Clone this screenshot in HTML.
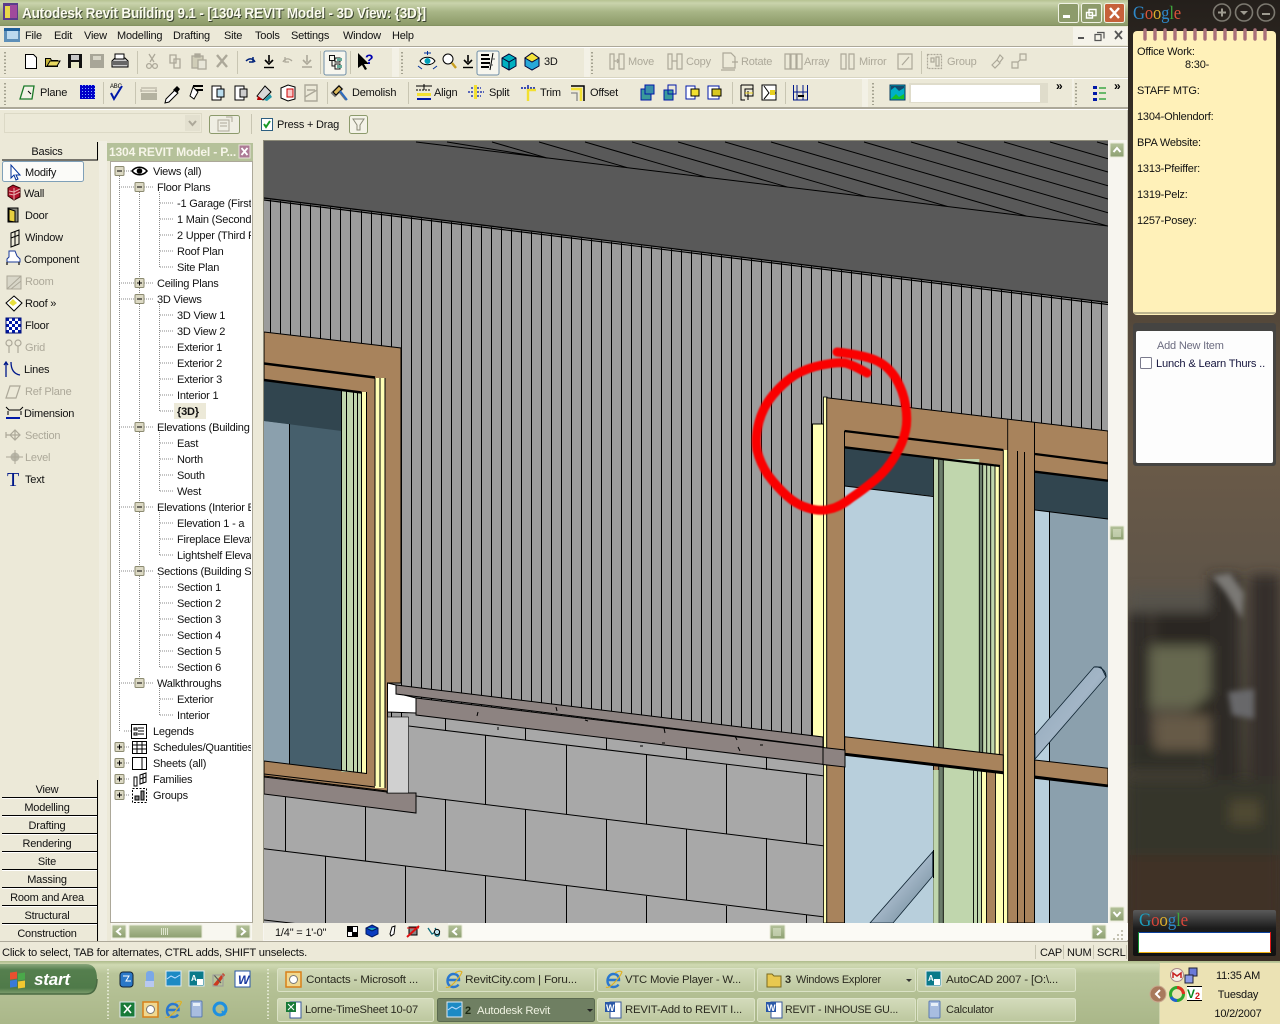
<!DOCTYPE html>
<html><head><meta charset="utf-8"><title>Autodesk Revit Building 9.1</title>
<style>
html,body{margin:0;padding:0;background:#ece9d8;overflow:hidden}
svg{display:block}
text{font-family:"Liberation Sans",sans-serif;font-size:11px;fill:#111;letter-spacing:-.2px}
.d{fill:#aca899}
.m{text-anchor:middle}
.g{font-family:"Liberation Serif",serif;font-size:19px}
.tk{fill:#2b2b20}
</style></head><body>
<svg width="1280" height="1024" viewBox="0 0 1280 1024" xmlns="http://www.w3.org/2000/svg" shape-rendering="auto">
<defs>
<linearGradient id="tb" x1="0" y1="0" x2="0" y2="1"><stop offset="0" stop-color="#b6c291"/><stop offset=".12" stop-color="#c9d3ac"/><stop offset=".45" stop-color="#a8b586"/><stop offset=".95" stop-color="#8d9b69"/><stop offset="1" stop-color="#7f8c5c"/></linearGradient>
<linearGradient id="tbar" x1="0" y1="0" x2="0" y2="1"><stop offset="0" stop-color="#aebb8b"/><stop offset=".06" stop-color="#cfd9b2"/><stop offset=".2" stop-color="#b9c59a"/><stop offset="1" stop-color="#aab789"/></linearGradient>
<linearGradient id="btn" x1="0" y1="0" x2="0" y2="1"><stop offset="0" stop-color="#d3dbbb"/><stop offset="1" stop-color="#bcc79e"/></linearGradient>
<linearGradient id="sb" x1="0" y1="0" x2="0" y2="1"><stop offset="0" stop-color="#b4c29a"/><stop offset="1" stop-color="#8d9f71"/></linearGradient>
<linearGradient id="start" x1="0" y1="0" x2="0" y2="1"><stop offset="0" stop-color="#8aa77c"/><stop offset=".2" stop-color="#557f4e"/><stop offset=".8" stop-color="#4f7a49"/><stop offset="1" stop-color="#80a06f"/></linearGradient>
<linearGradient id="wp" x1="0" y1="0" x2="0" y2="1"><stop offset="0" stop-color="#241f1b"/><stop offset=".15" stop-color="#3a3228"/><stop offset=".33" stop-color="#54483a"/><stop offset=".48" stop-color="#6a5a48"/><stop offset=".66" stop-color="#5a5248"/><stop offset=".85" stop-color="#3f3a30"/><stop offset="1" stop-color="#3b2f25"/></linearGradient>
<linearGradient id="pipe" x1="0" y1="0" x2="1" y2="1"><stop offset="0" stop-color="#8ea6b8"/><stop offset=".5" stop-color="#a2b5c6"/><stop offset="1" stop-color="#64808f"/></linearGradient>
<linearGradient id="gad" x1="0" y1="0" x2="0" y2="1"><stop offset="0" stop-color="#5a5a5a"/><stop offset=".4" stop-color="#1c1c1c"/><stop offset="1" stop-color="#111"/></linearGradient>
<pattern id="s1" x="1" y="0" width="10" height="10" patternUnits="userSpaceOnUse"><rect width="10" height="10" fill="#9c9c9c"/><rect width="1" height="10" fill="#000"/></pattern>
<pattern id="s0" x="0" y="0" width="10" height="10" patternUnits="userSpaceOnUse"><rect width="10" height="10" fill="#9c9c9c"/><rect width="1" height="10" fill="#000"/></pattern>
<pattern id="chk" width="6" height="6" patternUnits="userSpaceOnUse"><rect width="6" height="6" fill="#fff"/><rect width="3" height="3" fill="#0018a8"/><rect x="3" y="3" width="3" height="3" fill="#0018a8"/></pattern>
<pattern id="grd" width="3" height="3" patternUnits="userSpaceOnUse"><rect width="3" height="3" fill="#0000c8"/><rect x="1" y="1" width="1" height="1" fill="#7fb0ff"/></pattern>
<filter id="b1"><feGaussianBlur stdDeviation="0.7"/></filter>
<filter id="b3"><feGaussianBlur stdDeviation="3"/></filter>
<filter id="b6"><feGaussianBlur stdDeviation="6"/></filter>
<clipPath id="vp"><rect x="264" y="141" width="844" height="782"/></clipPath>
<clipPath id="tree"><rect x="111" y="162" width="140" height="760"/></clipPath>
<g id="mn"><rect x="-4.5" y="-4.5" width="9" height="9" rx="1" fill="#dcd9c4" stroke="#8b8a70"/><path d="M-2.5 0h5" stroke="#000"/></g>
<g id="pl"><rect x="-4.5" y="-4.5" width="9" height="9" rx="1" fill="#dcd9c4" stroke="#8b8a70"/><path d="M-2.5 0h5M0-2.5v5" stroke="#000"/></g>
<path id="rg" d="M0 0v9" stroke="#a8707a" stroke-width="3.4" stroke-linecap="round"/>
<g id="ie"><path d="M-6 1h11c0-4-2-6-5.500-6s-6 3-6 7 3 6 6 6 4-1 5-2.500" fill="none" stroke="#2a78d0" stroke-width="2.400"/><path d="M-8 8q2 2 8-4t8-11q-2-2-7 1" fill="none" stroke="#e0b020" stroke-width="1.100"/></g>
</defs>

<!-- base -->
<rect width="1280" height="1024" fill="#ece9d8"/>

<!-- wallpaper -->
<rect x="1128" y="0" width="152" height="961" fill="url(#wp)"/>
<g filter="url(#b6)">
<rect x="1128" y="590" width="90" height="24" fill="#56524c"/>
<rect x="1128" y="612" width="22" height="150" fill="#2f2a25"/>
<rect x="1152" y="612" width="58" height="34" fill="#2c2824"/>
<rect x="1150" y="646" width="60" height="62" fill="#66684f"/>
<rect x="1210" y="575" width="30" height="210" fill="#2f2a25"/>
<rect x="1250" y="575" width="30" height="220" fill="#352f2a"/>
<path d="M1150 745L1210 695V725L1165 760z" fill="#26221e"/>
<rect x="1128" y="745" width="80" height="25" fill="#2f2e27"/>
<rect x="1155" y="715" width="55" height="35" fill="#665a46"/>
<rect x="1128" y="780" width="152" height="75" fill="#34352a"/>
<rect x="1128" y="855" width="152" height="70" fill="#3f3327"/>
<rect x="1230" y="800" width="30" height="25" fill="#4f4a30"/>
</g>
<g filter="url(#b3)">
<path d="M1212 576l18-3 14 20-2 26-16-26z" fill="#7a7874"/>
<path d="M1228 692l26-3v30l-22-4z" fill="#67676a"/>
</g>

<!-- title bar -->
<rect x="0" y="0" width="1128" height="26" fill="url(#tb)"/>
<rect x="3" y="3" width="15" height="17" fill="#5a3d8c"/><rect x="5" y="6" width="5" height="12" fill="#e8d84a"/><rect x="10" y="5" width="7" height="13" fill="#a04a9c"/>
<text x="23" y="19" style="font-size:15px;font-weight:bold;fill:#3c4530" textLength="404" lengthAdjust="spacingAndGlyphs">Autodesk Revit Building 9.1 - [1304 REVIT Model - 3D View: {3D}]</text>
<text x="22" y="18" style="font-size:15px;font-weight:bold;fill:#fbfbef" textLength="404" lengthAdjust="spacingAndGlyphs">Autodesk Revit Building 9.1 - [1304 REVIT Model - 3D View: {3D}]</text>
<rect x="1058.5" y="3.5" width="20" height="19" rx="2" fill="#8d9b6b" stroke="#f0f2e4"/><rect x="1063" y="15" width="7" height="3" fill="#fff"/>
<rect x="1081.5" y="3.5" width="20" height="19" rx="2" fill="#8d9b6b" stroke="#f0f2e4"/><path d="M1089 9.5h7v6h-7z M1086.5 12.5h6v5.5h-6z" fill="none" stroke="#fff" stroke-width="1.4"/>
<rect x="1104.5" y="3.5" width="20" height="19" rx="2" fill="#c6613a" stroke="#f0f2e4"/><path d="M1110 8l9 10M1119 8l-9 10" stroke="#fff" stroke-width="2.4"/>

<!-- menu bar -->
<rect x="0" y="26" width="1128" height="20" fill="#ece9d8"/>
<rect x="4" y="28" width="16" height="14" fill="#5e8fb8"/><rect x="7" y="31" width="11" height="8" fill="#bcd9ee"/><rect x="4" y="28" width="16" height="3" fill="#1f5f9a"/>
<text x="25" y="39">File</text><text x="54" y="39">Edit</text><text x="84" y="39">View</text><text x="117" y="39">Modelling</text><text x="173" y="39">Drafting</text><text x="224" y="39">Site</text><text x="255" y="39">Tools</text><text x="291" y="39">Settings</text><text x="343" y="39">Window</text><text x="392" y="39">Help</text>
<rect x="1073" y="27" width="54" height="18" fill="#f5f3ea"/>
<rect x="1078" y="37" width="6" height="2" fill="#555"/>
<path d="M1097 32.5h7v6M1095 34.5h6v6h-6z" fill="none" stroke="#555" stroke-width="1.2"/>
<path d="M1115 31l7 8M1122 31l-7 8" stroke="#555" stroke-width="1.8"/>

<!-- toolbars -->
<rect x="0" y="46" width="1128" height="1" fill="#aca899"/><rect x="0" y="47" width="1128" height="1" fill="#fff"/>
<rect x="0" y="77" width="1128" height="1" fill="#d8d5c2"/><rect x="0" y="78" width="1128" height="1" fill="#fff"/>
<rect x="0" y="107" width="1128" height="2" fill="#aca899"/><rect x="0" y="109" width="1128" height="1" fill="#fff"/>
<rect x="392" y="48" width="7" height="29" fill="#f3f1e6"/><rect x="584" y="48" width="6" height="29" fill="#f3f1e6"/>
<rect x="862" y="79" width="6" height="28" fill="#f3f1e6"/><rect x="1072" y="79" width="2" height="28" fill="#f3f1e6"/>
<g stroke="#8c8a78" stroke-dasharray="1.5 2" stroke-width="1.5" fill="none">
<path d="M5 52v22M5 83v22M402 52v22M592 52v22M873 83v22M1076 83v22"/>
</g>
<g stroke="#c8c5b2"><path d="M137.5 51v23M237.5 51v23M320.5 51v23M350.5 51v23M921.5 51v23M103.5 82v22M135.5 82v22M327.5 82v22M408.5 82v22M732.5 82v22M785.5 82v22M251.5 114v20"/></g>

<!-- row 1 icons -->
<path d="M25.5 54.5h8l3 3v11h-11z" fill="#fff" stroke="#000"/>
<path d="M45.5 66.5v-8h5l1 2h6v6z" fill="#c7b63c" stroke="#000"/><path d="M47 66l3-5h10l-3 5z" fill="#e8d860" stroke="#000"/>
<rect x="68" y="54" width="14" height="14" fill="#111"/><rect x="71" y="55" width="8" height="5" fill="#c8c8c8"/><rect x="71" y="62" width="8" height="6" fill="#e8e8c8"/>
<rect x="90" y="54" width="14" height="14" fill="#a8a698"/><rect x="93" y="56" width="8" height="4" fill="#d8d6c8"/>
<path d="M115 58h10l3 3v6h-16v-6z" fill="#ccc" stroke="#000"/><rect x="115" y="54" width="9" height="5" fill="#fff" stroke="#000"/><path d="M113 62h14M113 64h14" stroke="#000"/>
<g fill="none" stroke="#aca899" stroke-width="1.3">
<path d="M149 54l5 8M155 54l-5 8"/><circle cx="149" cy="66" r="2.4"/><circle cx="155" cy="66" r="2.4"/>
<path d="M170 55h6v8h-6zM174 59h6v9h-6z"/>
<rect x="192" y="56" width="11" height="12" fill="#d0cdb8"/><rect x="195" y="54" width="5" height="3" fill="#aca899"/><rect x="198" y="60" width="8" height="9" fill="#e8e6d8"/>
<path d="M217 55l10 12M227 55l-10 12" stroke-width="2.4"/>
<path d="M283 62c2-4 6-4 9-1M285 57v5h4"/><path d="M307 55v7M303 60l4 4 4-4M302 67h10" stroke-width="1.6"/>
</g>
<path d="M255 62c-2-4-6-4-9-1M253 57v5h-4" fill="none" stroke="#00227a" stroke-width="1.5"/>
<path d="M269 55v7M265 60l4 4 4-4" fill="none" stroke="#000" stroke-width="1.6"/><path d="M264 67.5h10" stroke="#000" stroke-width="1.4"/>
<rect x="324" y="51" width="22" height="24" rx="2" fill="#f7f6ee" stroke="#6f8fa8"/>
<path d="M329.5 55.5h5v5h-5zM335 58h5v4h-5zM335 64h5v5h-5zM332 60v6h3" fill="none" stroke="#111"/>
<rect x="337" y="58" width="5" height="3" fill="#6a9"/><rect x="337" y="65" width="5" height="3" fill="#6a9"/>
<path d="M358 53v15l4-3 3 5 2-1-3-5h5z" fill="#000"/><text x="365" y="64" style="font-size:14px;font-weight:bold;fill:#0000b0">?</text>
<path d="M420 61c3-5 12-5 15 0-3 5-12 5-15 0z" fill="#fff" stroke="#000"/><circle cx="427.5" cy="61" r="3" fill="#00a0b8"/><path d="M427.5 51v4M424 53h7" stroke="#00309a"/><path d="M418 66l4 3M437 66l-4 3" stroke="#00309a"/>
<circle cx="448" cy="59" r="5" fill="#fff" stroke="#000"/><path d="M452 63l4 5" stroke="#caa020" stroke-width="2.4"/>
<path d="M468 55v7M464 60l4 4 4-4" fill="none" stroke="#000" stroke-width="1.6"/><path d="M463 67.5h10" stroke="#000" stroke-width="1.4"/>
<rect x="477" y="51" width="22" height="24" rx="2" fill="#f7f6ee" stroke="#6f8fa8"/>
<path d="M481 55h8M481 59h9M481 63h9M481 67h8" stroke="#000" stroke-width="2"/><path d="M490 70l3-17" stroke="#000"/><path d="M491 59h4M489 65h4" stroke="#555"/>
<path d="M509 54l7 4v8l-7 4-7-4v-8z" fill="#00b0c0" stroke="#003"/><path d="M502 58l7 4 7-4M509 62v8" fill="none" stroke="#003"/>
<path d="M532 53l7 5v8l-7 4-7-4v-8z" fill="#28a8d8" stroke="#003"/><path d="M525 58l7-5 7 5-7 4z" fill="#f2e23c" stroke="#003"/>
<text x="544" y="65">3D</text>
<g stroke="#aca899" fill="none" stroke-width="1.2">
<path d="M610 54h4v15h-4zM619 54h5v15h-5zM614 61h5M617 59l2 2-2 2"/>
<path d="M668 54h4v15h-4zM677 54h5v15h-5zM672 61h5"/>
<path d="M723 53h8l4 4v11h-12zM721 70h14M732 62h6"/>
<path d="M785 54h5v15h-5zM791 54h5v15h-5zM797 54h5v15h-5z"/>
<path d="M841 54h5v15h-5zM849 54h5v15h-5z"/>
<path d="M898 54h14v15h-14zM902 65l7-8"/>
<path d="M927.500 54.500h14v14h-14z" stroke-dasharray="2 1"/><rect x="931" y="58" width="3" height="4"/><rect x="936" y="57" width="3" height="9"/>
<path d="M992 65l5-5 3 3-5 5zM997 60l3-5 3 3-3 4"/><path d="M1012 62h6v6h-6zM1020 54h6v6h-6zM1018 62l2-2"/>
</g>
<text class="d" x="628" y="65">Move</text><text class="d" x="686" y="65">Copy</text><text class="d" x="741" y="65">Rotate</text><text class="d" x="804" y="65">Array</text><text class="d" x="859" y="65">Mirror</text><text class="d" x="947" y="65">Group</text>

<!-- row 2 icons -->
<path d="M24 86h10l-2 13H20z" fill="#fff" fill-opacity=".4" stroke="#1a7a28" stroke-width="1.3"/><path d="M28 91l3 3" stroke="#000"/>
<text x="40" y="96">Plane</text>
<rect x="80" y="85" width="15" height="14" fill="url(#grd)"/>
<text x="110" y="88" style="font-size:6px;fill:#000">ABC</text><path d="M111 93l3 6 8-13" fill="none" stroke="#0018a8" stroke-width="2"/>
<path d="M141 89v3M156 89v3" stroke="#aca899"/><path d="M141 88h16M141 91h16" stroke="#aca899"/><rect x="141" y="93" width="16" height="7" fill="#b4b2a0"/>
<path d="M166 99l9-9 3 3-9 9-4 1z" fill="#fff" stroke="#000"/><path d="M173 90l4-4 3 3-3 4z" fill="#000"/>
<path d="M190 96l3-9 5 5-4 7z" fill="#fff" stroke="#000"/><path d="M193 86h10M196 90h7" stroke="#000" stroke-width="2"/>
<rect x="212" y="86" width="9" height="14" fill="#fff" stroke="#000"/><rect x="217" y="89" width="7" height="8" fill="#bde" stroke="#000"/>
<rect x="235" y="86" width="9" height="14" fill="#fff" stroke="#000"/><rect x="240" y="89" width="7" height="8" fill="#ccc" stroke="#000"/>
<path d="M257 96l8-10 6 6-8 8z" fill="#d8d8d8" stroke="#000"/><path d="M258 96l5 4-6 0z" fill="#b00"/><path d="M264 100l6-6 2 3-5 4z" fill="#29a"/>
<path d="M281 88l7-3 7 2v12l-7 2-7-3z" fill="#fff" stroke="#000"/><rect x="287" y="89" width="6" height="8" fill="#f8c8c8" stroke="#c00"/>
<path d="M305 85h12v16h-12zM307 90h8M305 97l12-7" stroke="#aca899" fill="none" stroke-width="1.4"/>
<path d="M332 93l7-7 3 3-7 7zM338 90l8 10" fill="none" stroke="#777" stroke-width="2"/><path d="M333 92l6-6 3 3-6 6z" fill="#dcb95c" stroke="#000"/><path d="M340 91l7 9" stroke="#2c6cc0" stroke-width="2"/>
<text x="352" y="96">Demolish</text>
<path d="M416 86h16M424 84v6" stroke="#000"/><path d="M416 90h14" stroke="#000" stroke-dasharray="2 1"/><rect x="417" y="93" width="14" height="3" fill="#f2e030"/><path d="M417 99h14" stroke="#0018a8" stroke-width="2"/>
<text x="434" y="96">Align</text>
<path d="M468 92h16M471 88h10M471 96h10" stroke="#0018a8" stroke-dasharray="2 1" stroke-width="1.3"/><rect x="474" y="85" width="3" height="14" fill="#f2e030"/>
<text x="489" y="96">Split</text>
<path d="M521 88h14M528 85v16" stroke="#0018a8" stroke-width="1.4" stroke-dasharray="2 1"/><path d="M528 101V90h8" fill="none" stroke="#f2e030" stroke-width="2.4"/>
<text x="540" y="96">Trim</text>
<path d="M571 86h13v15" fill="none" stroke="#000" stroke-width="1.5"/><path d="M571 89h10v12" fill="none" stroke="#f2e030" stroke-width="2.5"/><path d="M571 93h6v8" fill="none" stroke="#888" stroke-width="1.3"/>
<text x="590" y="96">Offset</text>
<rect x="641" y="89" width="10" height="11" fill="#3a9a9a" stroke="#0018a8"/><rect x="645" y="85" width="9" height="9" fill="#3a8fa8" stroke="#0018a8"/>
<rect x="664" y="90" width="9" height="10" fill="#3a9a9a" stroke="#0018a8"/><rect x="668" y="85" width="8" height="9" fill="none" stroke="#0018a8"/>
<rect x="686" y="86" width="9" height="13" fill="#fff" stroke="#0018a8"/><rect x="691" y="89" width="8" height="7" fill="#f2e030" stroke="#000"/>
<rect x="708" y="86" width="11" height="13" fill="#fff" stroke="#0018a8"/><rect x="712" y="89" width="9" height="7" fill="#d8c820" stroke="#000"/>
<path d="M741 85h12v4M741 85v15h4" fill="none" stroke="#000"/><path d="M745 89h8v7h-8zM748 91v9" fill="none" stroke="#000"/><path d="M745 93h8" stroke="#e8d020"/>
<rect x="762" y="85" width="14" height="15" fill="#fff" stroke="#000"/><path d="M764 86l5 7-5 6M770 93h6" stroke="#000" fill="none"/><rect x="770" y="90" width="5" height="5" fill="#e8d020"/>
<path d="M793.500 85v15h14v-15M793 92h14M797 85v15M803 85v15" fill="none" stroke="#00188a"/><path d="M798 96h6" stroke="#000" stroke-width="2"/>
<rect x="890" y="85" width="15" height="15" fill="#00b0c8" stroke="#0a3a5a"/><path d="M891 90l4-3 4 4 5-3v-2h-13z" fill="#14496c"/><path d="M891 99l5-5 3 3 5-3v5z" fill="#18c02a"/>
<rect x="909" y="83" width="139" height="20" fill="#dfdccb"/><rect x="911" y="85" width="129" height="17" fill="#fff"/>
<text x="1056" y="90" style="font-size:12px;font-weight:bold;fill:#000">»</text><text x="1114" y="90" style="font-size:12px;font-weight:bold;fill:#000">»</text>
<path d="M1093 86h4v3h-4zM1093 92h4v3h-4zM1093 98h4v3h-4z" fill="#0018a8"/><path d="M1099 88h7M1099 93h7M1099 99h7" stroke="#1a9a28" stroke-width="1.2"/>

<!-- left palette -->
<rect x="0" y="141" width="99" height="801" fill="#ece9d8"/>
<rect x="99" y="141" width="8" height="801" fill="#f0eee2"/>

<!-- row 3 -->
<rect x="4.500" y="113.500" width="197" height="19" fill="#ece9d8" stroke="#dcd9c6"/><rect x="185" y="115" width="15" height="16" fill="#e3e0cf"/><path d="M189 121l3.500 4 3.500-4" fill="none" stroke="#aca899" stroke-width="2"/>
<rect x="209.500" y="115.500" width="30" height="18" rx="2" fill="#efeee3" stroke="#8c9a6c"/><rect x="218" y="120" width="11" height="11" fill="none" stroke="#aca899"/><path d="M220 123h7M220 126h7M226 117h6v5" fill="none" stroke="#aca899"/>
<rect x="261.500" y="118.500" width="11" height="12" fill="#fff" stroke="#2c5e80"/><path d="M264 124l2 3 4-6" fill="none" stroke="#1a9a28" stroke-width="2"/>
<text x="277" y="128">Press + Drag</text>
<rect x="349.500" y="115.500" width="18" height="18" rx="2" fill="#f4f3e8" stroke="#8c9a6c"/><path d="M353 119h11l-4 6v5h-3v-5z" fill="none" stroke="#8a8a78"/>

<rect x="2" y="142" width="96" height="18" fill="#ece9d8"/><path d="M97.500 142v18H2" fill="none" stroke="#000"/>
<text class="m" x="47" y="155">Basics</text>
<rect x="2.500" y="161.500" width="81" height="20" rx="2" fill="#fbfbf8" stroke="#7fa0b8"/>
<path d="M11 165v13l3-3 2 5 2-1-2-4h4z" fill="#fff" stroke="#00309a"/>
<text x="25" y="176">Modify</text><text x="24" y="197">Wall</text><text x="25" y="219">Door</text><text x="25" y="241">Window</text><text x="24" y="263">Component</text>
<text class="d" x="25" y="285">Room</text><text x="25" y="307">Roof »</text><text x="25" y="329">Floor</text><text class="d" x="25" y="351">Grid</text><text x="24" y="373">Lines</text><text class="d" x="25" y="395">Ref Plane</text><text x="24" y="417">Dimension</text><text class="d" x="25" y="439">Section</text><text class="d" x="25" y="461">Level</text><text x="25" y="483">Text</text>
<path d="M8 188l5-3 7 3v9l-6 3-6-4z" fill="#b0142c" stroke="#300"/><path d="M14 188v12M9 191l5 1 6-3M9 194l5 1 6-3" stroke="#e8b0b0" fill="none"/>
<rect x="8" y="208" width="10" height="14" fill="#8a8a80" stroke="#000"/><path d="M9 209l6 2v11l-6-1z" fill="#e8d040" stroke="#000"/>
<path d="M11 233l8-3v14l-8 3zM15 231v15M11 238l8-3" fill="none" stroke="#000"/>
<path d="M9 251h6l2 5 3 3v3H7v-3l2-2z" fill="#fff" stroke="#1a3a9a"/><path d="M7 262v3M19 262v3" stroke="#333" stroke-width="1.5"/>
<path d="M7 276h14v13H7z" fill="#d8d6c8" stroke="#aca899"/><path d="M7 289l14-13M11 289l10-8" stroke="#aca899"/>
<path d="M14 296l8 7-8 8-8-8z" fill="#fff" stroke="#000"/><path d="M13 299l4 4-4 3-4-3z" fill="#e8e040"/>
<rect x="6" y="318" width="15" height="15" fill="url(#chk)" stroke="#00107a"/>
<g stroke="#aca899" fill="none" stroke-width="1.2"><circle cx="9" cy="343" r="3"/><circle cx="18" cy="343" r="3"/><path d="M9 346v7M18 346v7"/><path d="M10 386h10l-4 12H6z"/><path d="M6 432v6M6 435h5M10 435l5-5 5 5-5 5zM10 435h10M15 430v10"/></g>
<circle cx="15" cy="457" r="4.500" fill="#b8b6a8"/><path d="M6 457h17M15 450v14" stroke="#aca899"/>
<path d="M6 362v15M4 365l2-3 2 3M11 362c0 8 3 12 9 13" fill="none" stroke="#00188a" stroke-width="1.3"/>
<path d="M6 407l3 3h11l3-3M8 411v4M21 411v4" fill="none" stroke="#000"/><rect x="6" y="417" width="14" height="2" fill="#0018a8"/>
<text x="7" y="486" style="font-family:'Liberation Serif',serif;font-size:20px;fill:#00188a">T</text>
<g>
<rect x="2" y="780" width="96" height="161" fill="#ece9d8"/>
<path d="M2 797.500h96M2 815.500h96M2 833.500h96M2 851.500h96M2 869.500h96M2 887.500h96M2 905.500h96M2 923.500h96M97.500 780v161" stroke="#000" fill="none"/>
<path d="M2 798.500h95M2 816.500h95M2 834.500h95M2 852.500h95M2 870.500h95M2 888.500h95M2 906.500h95M2 924.500h95" stroke="#fff"/>
</g>
<text class="m" x="47" y="793">View</text><text class="m" x="47" y="811">Modelling</text><text class="m" x="47" y="829">Drafting</text><text class="m" x="47" y="847">Rendering</text><text class="m" x="47" y="865">Site</text><text class="m" x="47" y="883">Massing</text><text class="m" x="47" y="901">Room and Area</text><text class="m" x="47" y="919">Structural</text><text class="m" x="47" y="937">Construction</text>

<!-- project browser -->
<rect x="107" y="141" width="156" height="800" fill="#ece9d8"/>
<rect x="107" y="143" width="146" height="18" fill="#b5c19a"/>
<text x="109" y="156" style="font-weight:bold;font-size:12px;fill:#f6f5e8" textLength="127" lengthAdjust="spacingAndGlyphs">1304 REVIT Model - P...</text>
<rect x="239" y="145" width="11" height="13" fill="#ad7b96" stroke="#e8e2d8"/><path d="M241.500 148l6 7M247.500 148l-6 7" stroke="#fff" stroke-width="1.8"/>
<rect x="110.500" y="161.500" width="142" height="761" fill="#fff" stroke="#aca899"/>
<g stroke="#8a8a8a" stroke-dasharray="1 1" fill="none">
<path d="M119.500 176V731M139.500 192V683M159.500 192V267M159.500 304V411M159.500 432V491M159.500 512V555M159.500 576V667M159.500 688V715"/>
<path d="M124 171h8M124 731h8M124 747h6M124 763h6M124 779h6M124 795h6M119 187h16M119 283h16M119 299h16M119 427h16M119 507h16M119 571h16M119 683h16M144 187h10M144 283h10M144 299h10M144 427h10M144 507h10M144 571h10M144 683h10"/>
<path d="M160 203h14M160 219h14M160 235h14M160 251h14M160 267h14M160 315h14M160 331h14M160 347h14M160 363h14M160 379h14M160 395h14M160 411h13M160 443h14M160 459h14M160 475h14M160 491h14M160 523h14M160 539h14M160 555h14M160 587h14M160 603h14M160 619h14M160 635h14M160 651h14M160 667h14M160 699h14M160 715h14"/>
</g>
<use href="#mn" x="119.500" y="171"/><use href="#mn" x="139.500" y="187"/><use href="#pl" x="139.500" y="283"/><use href="#mn" x="139.500" y="299"/><use href="#mn" x="139.500" y="427"/><use href="#mn" x="139.500" y="507"/><use href="#mn" x="139.500" y="571"/><use href="#mn" x="139.500" y="683"/><use href="#pl" x="119.500" y="747"/><use href="#pl" x="119.500" y="763"/><use href="#pl" x="119.500" y="779"/><use href="#pl" x="119.500" y="795"/>
<path d="M132 171c4-5 11-5 15 0-4 5-11 5-15 0z" fill="#fff" stroke="#000" stroke-width="1.5"/><circle cx="139.500" cy="171" r="2.800" fill="#000"/>
<rect x="131.500" y="724.500" width="15" height="14" fill="#fff" stroke="#000"/><path d="M134 728h3v2h-3zM134 733h3v2h-3zM138 728h6M138 731h6M138 734h6" stroke="#000" fill="none"/>
<path d="M132.500 741.500h14v12h-14zM132 745h15M132 749h15M137 742v12M142 742v12" fill="none" stroke="#000"/>
<path d="M132.500 757.500h14v12h-14zM142 758v12" fill="none" stroke="#000"/>
<path d="M134 777h3v9h-3z" fill="#fff" stroke="#000"/><path d="M140 775l6-2v9l-6 2zM143 774v9M140 779l6-2" fill="none" stroke="#000"/>
<rect x="132.500" y="788.500" width="14" height="14" fill="none" stroke="#000" stroke-dasharray="2 1.500"/><rect x="135" y="796" width="4" height="4" fill="#888" stroke="#000"/><rect x="141" y="791" width="3" height="9" fill="#888" stroke="#000"/>
<rect x="174" y="403" width="32" height="16" fill="#ece9d8"/>
<g clip-path="url(#tree)">
<text x="153" y="175">Views (all)</text><text x="157" y="191">Floor Plans</text>
<text x="177" y="207">-1 Garage (First Floor)</text><text x="177" y="223">1 Main (Second Floor)</text><text x="177" y="239">2 Upper (Third Floor)</text><text x="177" y="255">Roof Plan</text><text x="177" y="271">Site Plan</text>
<text x="157" y="287">Ceiling Plans</text><text x="157" y="303">3D Views</text>
<text x="177" y="319">3D View 1</text><text x="177" y="335">3D View 2</text><text x="177" y="351">Exterior 1</text><text x="177" y="367">Exterior 2</text><text x="177" y="383">Exterior 3</text><text x="177" y="399">Interior 1</text><text x="177" y="415" style="font-weight:bold">{3D}</text>
<text x="157" y="431">Elevations (Building Elevation)</text>
<text x="177" y="447">East</text><text x="177" y="463">North</text><text x="177" y="479">South</text><text x="177" y="495">West</text>
<text x="157" y="511">Elevations (Interior Elevation)</text>
<text x="177" y="527">Elevation 1 - a</text><text x="177" y="543">Fireplace Elevation</text><text x="177" y="559">Lightshelf Elevation</text>
<text x="157" y="575">Sections (Building Section)</text>
<text x="177" y="591">Section 1</text><text x="177" y="607">Section 2</text><text x="177" y="623">Section 3</text><text x="177" y="639">Section 4</text><text x="177" y="655">Section 5</text><text x="177" y="671">Section 6</text>
<text x="157" y="687">Walkthroughs</text><text x="177" y="703">Exterior</text><text x="177" y="719">Interior</text>
<text x="153" y="735">Legends</text><text x="153" y="751">Schedules/Quantities</text><text x="153" y="767">Sheets (all)</text><text x="153" y="783">Families</text><text x="153" y="799">Groups</text>
</g>
<rect x="111" y="923" width="141" height="17" fill="#f8f7f0"/>
<rect x="112" y="925" width="14" height="13" rx="1" fill="url(#sb)" stroke="#e8ead8"/><path d="M121 928l-4 3.500 4 3.500" fill="none" stroke="#fff" stroke-width="2"/>
<rect x="129" y="925" width="73" height="13" rx="1" fill="url(#sb)" stroke="#e8ead8"/><path d="M161.500 928v7M163.500 928v7M165.500 928v7M167.500 928v7" stroke="#dfe6cf"/>
<rect x="236" y="925" width="14" height="13" rx="1" fill="url(#sb)" stroke="#e8ead8"/><path d="M241 928l4 3.500-4 3.500" fill="none" stroke="#fff" stroke-width="2"/>

<!-- viewport -->
<rect x="263" y="140" width="865" height="801" fill="#f7f5ef"/>
<path d="M263.500 141V923M263 140.500H1108" stroke="#8c8a78"/>
<g clip-path="url(#vp)">
<rect x="264" y="141" width="90" height="782" fill="url(#s0)"/>
<rect x="354" y="141" width="754" height="782" fill="url(#s1)"/>
<path d="M264 141H1108V303L264 199z" fill="#595959"/>
<path d="M264 198L1108 302.500M264 200L1108 304.500" stroke="#000" stroke-width="1.200"/>
<g stroke="#000" fill="none"><path d="M416 142L1108 226M447 142L547 158M492 142L547 158M539 142L627.500 167.700M585 142L706.700 177.300M632 142L788 187.200M678 142L867 196.800M725 142L947.600 206.500M771 142L1026.600 216.100M818 142L1107 225.800M864 142L1108 212.800M911 142L1108 199M957 142L1108 185.800M1004 142L1108 172M1050 142L1108 158.800M1097 142L1108 145"/></g>

<!-- block wall -->
<path d="M408 710L825 762V923H264V792H408z" fill="#a8a8a8"/>
<g stroke="#000" fill="none">
<path d="M408.500 726L825 776M416 796L825 846M264 848.700L825 917M264 920L295 923.500"/>
<path d="M408 718L408 726"/>
<path d="M445.500 719v12M525.500 728v12M606.500 738v12M686.500 748v12M766.500 757v13"/>
<path d="M485.500 735v69M566.500 745v69M646.500 755v69M726.500 764v70M806.500 774v70"/>
<path d="M285.500 795v56M365.500 800v61M445.500 799v72M525.500 809v71M606.500 819v71M686.500 829v71M766.500 838v72"/>
<path d="M325.500 856v67M405.500 866v57M485.500 876v47M566.500 886v37M646.500 896v27M726.500 906v17M806.500 915v8"/>
</g>

<!-- left window -->
<path d="M264 332L401 348V683H387.500V792H264z" fill="#a8835c" stroke="#000"/>
<path d="M264 380L341.500 390V770L264 761z" fill="#465f6c"/>
<path d="M264 421L289.500 424V764L264 761z" fill="#8ba0ad"/>
<path d="M264 380L341.500 390V431L264 421z" fill="#31454f"/>
<path d="M289.500 424V764" stroke="#000"/>
<rect x="341.500" y="391" width="20" height="381" fill="#c0d6ad"/>
<rect x="361.500" y="392" width="5" height="381" fill="#ffffb4"/>
<rect x="375" y="378" width="10" height="410" fill="#ffffb4"/>
<path d="M341.500 391V771M346.500 391V771M353.500 391V772M357.500 392V772M361.500 392V773M366.500 392V774M375 378V786M380 378V787M385 378V788" stroke="#000"/>
<path d="M264 363.500L375 377.500M264 380L361.500 392.500" stroke="#000" stroke-width="2.400"/>
<path d="M264 761L366.500 773.500M264 774L375 787M264 776L387 791" stroke="#000"/>
<path d="M264 777L387 792V793H416V813L264 794z" fill="#8d8381" stroke="#000"/>
<rect x="387.500" y="717" width="21" height="76" fill="#d0d0d0" stroke="#000" stroke-width=".6"/>
<path d="M387.500 683L396 685V693L416 698V713L387.500 712z" fill="#fff" stroke="#000"/>

<!-- yellow strip beside right window -->
<rect x="812.500" y="424" width="11" height="316" fill="#ffffb4" stroke="#000"/>
<!-- bands -->
<path d="M396 685L823 737V747L396 694z" fill="#8d8381" stroke="#000"/>
<path d="M416 698L845 750V767L416 715z" fill="#8d8381" stroke="#000"/>
<g stroke="#000" fill="none"><path d="M478 712l-1 4M556 707l1 4M585 720l3 1M664 728l1 5M735 736l2 4M760 745h3M738 747l2 4M498 727v3M640 746h3M662 743h3"/></g>

<!-- right window -->
<rect x="823.500" y="397" width="3.500" height="526" fill="#ffffb4" stroke="#000" stroke-width=".8"/>
<path d="M826.700 397.700L1108 431V923H826.700z" fill="#a8835c" stroke="#000"/>
<path d="M844.500 486L933.500 496V923H844.500z" fill="#b8cfdc"/>
<path d="M844.500 447L933.300 458V496L844.500 486z" fill="#31454f"/>
<path d="M844.500 486L933.300 496.500" stroke="#000"/>
<path d="M844.500 431V923" stroke="#000"/>
<!-- central strips upper -->
<rect x="933.300" y="458" width="5.400" height="300" fill="#c0d6ad"/><rect x="938.700" y="459" width="4.600" height="464" fill="#6b7c6b"/><rect x="943.300" y="459" width="36" height="464" fill="#c0d6ad"/>
<rect x="979.300" y="463" width="3.400" height="295" fill="#6b7c6b"/><rect x="982.700" y="464" width="12.300" height="295" fill="#c0d6ad"/>
<rect x="995" y="465" width="4.300" height="296" fill="#ffffb4"/><rect x="999.300" y="450" width="4" height="306" fill="#a8835c"/><rect x="1003.300" y="450" width="4.400" height="473" fill="#ffffb4"/>
<path d="M933.500 458V923M938.700 458V923M943.300 459V923M979.300 463V755M982.700 463V755M986.700 464V755M990.700 465V755M995 465V757M999.300 465V757M1003.300 450V772M1007.700 419V923" stroke="#000" stroke-width=".9"/>
<!-- central strips lower -->
<rect x="933.300" y="770" width="5.400" height="153" fill="#c0d6ad"/>
<rect x="973.300" y="770" width="8" height="153" fill="#c0d6ad"/><rect x="981.300" y="770" width="5" height="153" fill="#ffffb4"/><rect x="986.300" y="770" width="9" height="153" fill="#a8835c"/><rect x="995.300" y="770" width="8" height="153" fill="#ffffb4"/>
<path d="M973.500 770V923M977.500 770V923M981.500 770V923M986.500 770V923M995.500 770V923M1003.500 772V923" stroke="#000" stroke-width=".9"/>
<!-- mullion lines -->
<path d="M1017.500 451V923M1024.500 452V923M1034.500 422V923" stroke="#000"/>
<!-- right pane -->
<path d="M1035 505L1108 514V923H1035z" fill="#8ba0ad"/><path d="M1035 505L1049.500 507V923H1035z" fill="#b8cfdc"/>
<path d="M1035 472L1108 481V519L1035 510z" fill="#31454f"/>
<path d="M1035 510L1108 519M1049.500 511V923" stroke="#000"/>
<path d="M844.500 431L1003.300 450M844.500 447.300L1000 466M1035 454L1108 463.300M1035 471.700L1108 480.700" stroke="#000" stroke-width="2.300"/>
<!-- pipe -->
<path d="M1094 667L1035 735V759L1106 677L1101 667z" fill="url(#pipe)" stroke="#0d2230" stroke-width=".8"/>
<path d="M1094 667c6-1 12 3 12 10" fill="none" stroke="#0d2230"/>
<path d="M932.700 851.700V876L893 923H870z" fill="url(#pipe)" stroke="#0d2230" stroke-width=".8"/>
<path d="M933.500 850V878" stroke="#000"/>
<!-- transoms -->
<path d="M844.700 736.700L1003.300 755V771.700L844.700 753.300z" fill="#a8835c" stroke="#000"/>
<path d="M844.700 754.500L1003.300 773" stroke="#000" stroke-width="2.400"/>
<path d="M1034.700 760L1108 768.300V785L1034.700 776z" fill="#a8835c" stroke="#000"/>
<path d="M1034.700 777.500L1108 786" stroke="#000" stroke-width="2.400"/>
<path d="M823 747.500L845 750V767L823 764.500z" fill="#8d8381" stroke="#000"/>
<!-- red circle -->
<path d="M837 352Q863 355 875 360Q887 365 895 377Q903 390 905.500 405Q908 420 905.500 431Q903 443 895 456Q887 470 875 480Q863 490 851 498Q840 507 830 509Q820 512 808 508Q797 505 787 496Q777 487 768 475Q760 463 757 450Q755 437 759 422Q763 407 773 395Q783 383 795 375Q807 368 822 365Q837 362 845 363Q853 365 867 373" fill="none" stroke="#fa0000" stroke-width="9" stroke-linecap="round" filter="url(#b1)"/>
</g>

<!-- v scrollbar -->
<rect x="1108" y="141" width="20" height="800" fill="#f7f5ef"/>
<rect x="1127" y="110" width="1" height="851" fill="#c8c6b6"/>
<rect x="1110" y="143" width="14" height="14" rx="1" fill="url(#sb)" stroke="#e8ead8"/><path d="M1113.500 152l3.500-4 3.500 4" fill="none" stroke="#fff" stroke-width="2"/>
<rect x="1110" y="526" width="14" height="14" rx="1" fill="url(#sb)" stroke="#e8ead8"/><path d="M1113 530h8M1113 532h8M1113 534h8M1113 536h8" stroke="#e4ebd4"/>
<rect x="1110" y="907" width="14" height="14" rx="1" fill="url(#sb)" stroke="#e8ead8"/><path d="M1113.500 912l3.500 4 3.500-4" fill="none" stroke="#fff" stroke-width="2"/>

<!-- h bar under viewport -->
<rect x="264" y="923" width="864" height="17" fill="#fbfaf5"/>
<rect x="264" y="923" width="184" height="17" fill="#f2f0e4"/>
<text x="275" y="936">1/4" = 1'-0"</text>
<rect x="347.500" y="926.500" width="10" height="10" fill="#fff" stroke="#000"/><rect x="348" y="927" width="5" height="5" fill="#000"/><rect x="352" y="932" width="5" height="5" fill="#000"/>
<path d="M372 925l6 3v6l-6 3-6-3v-6z" fill="#0a3cc0" stroke="#001860"/><path d="M366 928l6 3 6-3" fill="#1aa0c0" stroke="#001860"/>
<path d="M390 934l2-7 3-1-1 8-3 2z" fill="#fff" stroke="#000"/>
<path d="M409 927h8v8h-8z" fill="#888" stroke="#000"/><path d="M407 937l12-11" stroke="#e01010" stroke-width="2"/><path d="M407 928h12" stroke="#e01010"/>
<path d="M428 928l4 6 5-3-2-3M437 931c2 0 3 3 2 4-1 2-4 1-4-1" fill="none" stroke="#0a6a7a" stroke-width="1.300"/><circle cx="437" cy="932" r="2.600" fill="#bfe4ee" stroke="#000"/>
<rect x="448" y="925" width="14" height="13" rx="1" fill="url(#sb)" stroke="#e8ead8"/><path d="M457 928l-4 3.500 4 3.500" fill="none" stroke="#fff" stroke-width="2"/>
<rect x="770" y="925" width="15" height="14" rx="1" fill="url(#sb)" stroke="#e8ead8"/><path d="M774 928v8M776 928v8M778 928v8M780 928v8" stroke="#e4ebd4"/>
<rect x="1092" y="925" width="14" height="14" rx="1" fill="url(#sb)" stroke="#e8ead8"/><path d="M1097 928l4 3.500-4 3.500" fill="none" stroke="#fff" stroke-width="2"/>
<path d="M1121 930h2v2h-2zM1117 934h2v2h-2zM1121 934h2v2h-2zM1113 938h2v2h-2zM1117 938h2v2h-2zM1121 938h2v2h-2z" fill="#c4c2b2"/>

<!-- status bar -->
<rect x="0" y="941" width="1128" height="1" fill="#aca899"/><rect x="0" y="942" width="1128" height="19" fill="#ece9d8"/>
<text x="2" y="956" textLength="305" lengthAdjust="spacingAndGlyphs">Click to select, TAB for alternates, CTRL adds, SHIFT unselects.</text>
<path d="M1035.500 945v14M1063.500 945v14M1093.500 945v14M1126.500 945v14" stroke="#c8c5b2"/>
<text x="1040" y="956">CAP</text><text x="1067" y="956">NUM</text><text x="1097" y="956">SCRL</text>

<!-- sidebar gadgets -->
<text class="g" x="1133" y="19" textLength="48" lengthAdjust="spacingAndGlyphs"><tspan fill="#2e88c8">G</tspan><tspan fill="#d8553a">o</tspan><tspan fill="#dcae2c">o</tspan><tspan fill="#2e88c8">g</tspan><tspan fill="#3fa43c">l</tspan><tspan fill="#d8553a">e</tspan></text>
<g fill="none" stroke="#7c7970" stroke-width="1.600"><circle cx="1222" cy="12.500" r="8.500"/><circle cx="1244" cy="12.500" r="8.500"/><circle cx="1266" cy="12.500" r="8.500"/></g>
<path d="M1218 12.500h8M1222 8.500v8" stroke="#9e9b90" stroke-width="2"/><path d="M1240 11h8l-4 4z" fill="#9e9b90"/><path d="M1262 14h8" stroke="#9e9b90" stroke-width="2"/>
<rect x="1133" y="31" width="143" height="284" rx="4" fill="#fff1b9"/><path d="M1134 313h141" stroke="#bdb58e" stroke-width="2"/>
<g><use href="#rg" x="1145" y="30"/><use href="#rg" x="1155" y="30"/><use href="#rg" x="1165" y="30"/><use href="#rg" x="1175" y="30"/><use href="#rg" x="1185" y="30"/><use href="#rg" x="1195" y="30"/><use href="#rg" x="1205" y="30"/><use href="#rg" x="1215" y="30"/><use href="#rg" x="1225" y="30"/><use href="#rg" x="1235" y="30"/><use href="#rg" x="1245" y="30"/><use href="#rg" x="1255" y="30"/><use href="#rg" x="1265" y="30"/></g>
<text x="1137" y="55">Office Work:</text><text x="1185" y="68">8:30-</text><text x="1137" y="94">STAFF MTG:</text><text x="1137" y="120">1304-Ohlendorf:</text><text x="1137" y="146">BPA Website:</text><text x="1137" y="172">1313-Pfeiffer:</text><text x="1137" y="198">1319-Pelz:</text><text x="1137" y="224">1257-Posey:</text>
<rect x="1133" y="323" width="143" height="143" rx="3" fill="#454442"/>
<rect x="1136" y="331" width="137" height="132" rx="2" fill="#fdfdfd"/>
<text x="1157" y="349" style="fill:#6c6c80">Add New Item</text>
<rect x="1140.500" y="357.500" width="11" height="11" rx="1" fill="#fff" stroke="#7a7a8c"/>
<text x="1156" y="367" style="fill:#16163e" textLength="109" lengthAdjust="spacingAndGlyphs">Lunch &amp; Learn Thurs ..</text>
<rect x="1133" y="910" width="143" height="46" rx="2" fill="url(#gad)"/>
<text class="g" x="1139" y="926" textLength="49" lengthAdjust="spacingAndGlyphs"><tspan fill="#1b9fc0">G</tspan><tspan fill="#d8453a">o</tspan><tspan fill="#dcae2c">o</tspan><tspan fill="#2e88c8">g</tspan><tspan fill="#3fa43c">l</tspan><tspan fill="#d8453a">e</tspan></text>
<rect x="1138" y="932" width="133" height="21" fill="#fff"/>
<path d="M1138 932.500h133" stroke="#0b3f9c"/><path d="M1270.500 932v21" stroke="#e01818"/><path d="M1138 952.500h133" stroke="#f0b010"/><path d="M1138.500 932v21" stroke="#109030"/>

<!-- taskbar -->
<rect x="0" y="961" width="1280" height="63" fill="url(#tbar)"/>
<path d="M0 964H86Q97 964 97 979Q97 994 86 994H0z" fill="url(#start)"/>
<path d="M0 994H86Q97 994 97 979" fill="none" stroke="#4a6a42" stroke-width="1.500"/>
<rect x="10" y="972" width="7" height="7" fill="#e85030" transform="skewY(-8) translate(0,2)"/><rect x="18" y="972" width="7" height="7" fill="#4aa84a" transform="skewY(-8) translate(0,4)"/><rect x="10" y="980" width="7" height="7" fill="#3a7ad8" transform="skewY(-8) translate(0,2)"/><rect x="18" y="980" width="7" height="7" fill="#f2c830" transform="skewY(-8) translate(0,4)"/>
<text x="34" y="985" style="font-size:17px;font-weight:bold;font-style:italic;fill:#fff">start</text>
<g stroke="#e8ecd8" stroke-dasharray="1.500 2" stroke-width="1.800"><path d="M108 969v50M268 969v50"/></g>
<g>
<rect x="120" y="972" width="13" height="15" rx="3" fill="#2a78c8" stroke="#123"/><path d="M123 976h6l-3 5h5" stroke="#fff" fill="none"/>
<rect x="146" y="971" width="8" height="16" rx="3" fill="#7aa8e8"/><rect x="145" y="981" width="9" height="6" fill="#b8c8f0"/>
<rect x="166" y="971" width="15" height="15" fill="#1c8ac4" stroke="#dfeaf2"/><path d="M167 979l4-3 4 2 5-3" stroke="#bdf" fill="none"/>
<rect x="189" y="971" width="15" height="15" fill="#0a7a8a" stroke="#dfeaf2"/><rect x="197" y="979" width="6" height="6" fill="#fff"/><text x="191" y="981" style="font-size:8px;font-weight:bold;fill:#fff">A</text>
<path d="M213 985l10-12 2 2-8 11z" fill="#cc3a20"/><path d="M214 975l7 8" stroke="#555"/><rect x="213" y="975" width="10" height="11" fill="none" stroke="#999"/>
<rect x="235" y="971" width="15" height="16" fill="#fff" stroke="#2a58a8"/><text x="238" y="984" style="font-size:12px;font-weight:bold;font-style:italic;fill:#1838a0">W</text>
<rect x="120" y="1002" width="15" height="15" fill="#187a38" stroke="#dfeaf2"/><path d="M124 1005l7 8M131 1005l-7 8" stroke="#fff" stroke-width="1.600"/>
<rect x="143" y="1002" width="15" height="15" fill="#f0d890" stroke="#d88018" stroke-width="1.500"/><circle cx="150.500" cy="1009.500" r="4" fill="#fff" stroke="#777"/>
<use href="#ie" x="173.500" y="1009"/>
<rect x="191" y="1001" width="11" height="16" rx="1" fill="#a8bde0" stroke="#5a7ab0"/><rect x="193" y="1003" width="7" height="3" fill="#e8f0f8"/>
<circle cx="220" cy="1009" r="6" fill="none" stroke="#1e90e0" stroke-width="3"/><path d="M222 1011l3 4" stroke="#1e90e0" stroke-width="2"/>
</g>
<!-- task buttons -->
<g fill="url(#btn)" stroke="#dbe2c6">
<rect x="277.500" y="968.500" width="156" height="23" rx="2"/><rect x="437.500" y="968.500" width="157" height="23" rx="2"/><rect x="597.500" y="968.500" width="157" height="23" rx="2"/><rect x="757.500" y="968.500" width="158" height="23" rx="2"/><rect x="917.500" y="968.500" width="158" height="23" rx="2"/>
<rect x="277.500" y="998.500" width="156" height="23" rx="2"/><rect x="597.500" y="998.500" width="157" height="23" rx="2"/><rect x="757.500" y="998.500" width="158" height="23" rx="2"/><rect x="917.500" y="998.500" width="158" height="23" rx="2"/>
</g>
<rect x="437.500" y="998.500" width="157" height="23" rx="2" fill="#6f7f62" stroke="#5b6a50"/>
<rect x="286" y="972" width="15" height="15" fill="#f0d890" stroke="#d88018" stroke-width="1.500"/><circle cx="293.500" cy="979.500" r="4" fill="#fff" stroke="#777"/>
<text x="306" y="983" class="tk" textLength="112" lengthAdjust="spacingAndGlyphs">Contacts - Microsoft ...</text>
<use href="#ie" x="454" y="979"/>
<text x="465" y="983" class="tk" textLength="112" lengthAdjust="spacingAndGlyphs">RevitCity.com | Foru...</text>
<use href="#ie" x="614" y="979"/>
<text x="625" y="983" class="tk" textLength="116" lengthAdjust="spacingAndGlyphs">VTC Movie Player - W...</text>
<path d="M767 974h5l2 2h7v11h-14z" fill="#e8c850" stroke="#7a6a20"/>
<text x="785" y="983" style="font-weight:bold;fill:#2b2b20">3</text><text x="796" y="983" class="tk" textLength="85" lengthAdjust="spacingAndGlyphs">Windows Explorer</text><path d="M906 979h6l-3 3z" fill="#333"/>
<rect x="926" y="971" width="15" height="15" fill="#0a7a8a" stroke="#dfeaf2"/><rect x="934" y="979" width="6" height="6" fill="#fff"/><text x="928" y="981" style="font-size:8px;font-weight:bold;fill:#fff">A</text>
<text x="946" y="983" class="tk" textLength="112" lengthAdjust="spacingAndGlyphs">AutoCAD 2007 - [O:\...</text>
<path d="M290 1002h11v16h-11z" fill="#fff" stroke="#3a5a9a"/><rect x="286" y="1002" width="10" height="10" fill="#187a38"/><path d="M288 1004l6 6M294 1004l-6 6" stroke="#fff"/>
<text x="305" y="1013" class="tk" textLength="113" lengthAdjust="spacingAndGlyphs">Lorne-TimeSheet 10-07</text>
<rect x="447" y="1002" width="15" height="15" fill="#1c8ac4" stroke="#dfeaf2"/><path d="M448 1010l4-3 4 2 5-3" stroke="#bdf" fill="none"/>
<text x="465" y="1014" style="font-weight:bold;fill:#1e2a14">2</text><text x="477" y="1014" style="fill:#eef1e0" textLength="73" lengthAdjust="spacingAndGlyphs">Autodesk Revit</text><path d="M587 1009h6l-3 3z" fill="#222"/>
<rect x="610" y="1002" width="11" height="16" fill="#fff" stroke="#3a5a9a"/><rect x="605" y="1002" width="10" height="10" fill="#2a58a8"/><text x="606" y="1011" style="font-size:9px;font-weight:bold;fill:#fff">W</text>
<text x="625" y="1013" class="tk" textLength="117" lengthAdjust="spacingAndGlyphs">REVIT-Add to REVIT I...</text>
<rect x="771" y="1002" width="11" height="16" fill="#fff" stroke="#3a5a9a"/><rect x="766" y="1002" width="10" height="10" fill="#2a58a8"/><text x="767" y="1011" style="font-size:9px;font-weight:bold;fill:#fff">W</text>
<text x="785" y="1013" class="tk" textLength="113" lengthAdjust="spacingAndGlyphs">REVIT - INHOUSE GU...</text>
<rect x="929" y="1001" width="11" height="17" rx="1" fill="#a8bde0" stroke="#5a7ab0"/><rect x="931" y="1003" width="7" height="3" fill="#e8f0f8"/>
<text x="946" y="1013" class="tk">Calculator</text>
<!-- tray -->
<rect x="1159" y="963" width="121" height="61" fill="#ebe2b4"/><path d="M1159.500 963v61" stroke="#cfd4ac"/>
<circle cx="1158" cy="994" r="8" fill="#a8795c" stroke="#c9a88e"/><path d="M1160 990l-4 4 4 4" fill="none" stroke="#fff" stroke-width="2"/>
<circle cx="1177" cy="975" r="6.500" fill="#f4f0e8" stroke="#a88"/><path d="M1173 978v-5l4 3 4-3v5" fill="none" stroke="#c82020" stroke-width="1.500"/>
<rect x="1189" y="968" width="8" height="8" fill="#6a7ad8" stroke="#223"/><rect x="1185" y="975" width="8" height="8" fill="#8a9ae8" stroke="#223"/>
<circle cx="1177" cy="994" r="6.500" fill="none" stroke="#2fa82f" stroke-width="3"/><path d="M1177 987.500a6.500 6.500 0 0 1 6.500 6.500" fill="none" stroke="#e03020" stroke-width="3"/><path d="M1171 997a6.500 6.500 0 0 0 6 3.500" fill="none" stroke="#2060d0" stroke-width="3"/>
<rect x="1187" y="986" width="15" height="15" fill="#fff"/><path d="M1187 986.500h15M1187 1000.500h15" stroke="#000"/><text x="1187" y="998" style="font-size:12px;font-weight:bold;fill:#0a8a20">V</text><text x="1195" y="999" style="font-size:9px;font-weight:bold;fill:#d01010">2</text>
<text class="m" x="1238" y="979">11:35 AM</text><text class="m" x="1238" y="998">Tuesday</text><text class="m" x="1238" y="1017">10/2/2007</text>
</svg>
</body></html>
